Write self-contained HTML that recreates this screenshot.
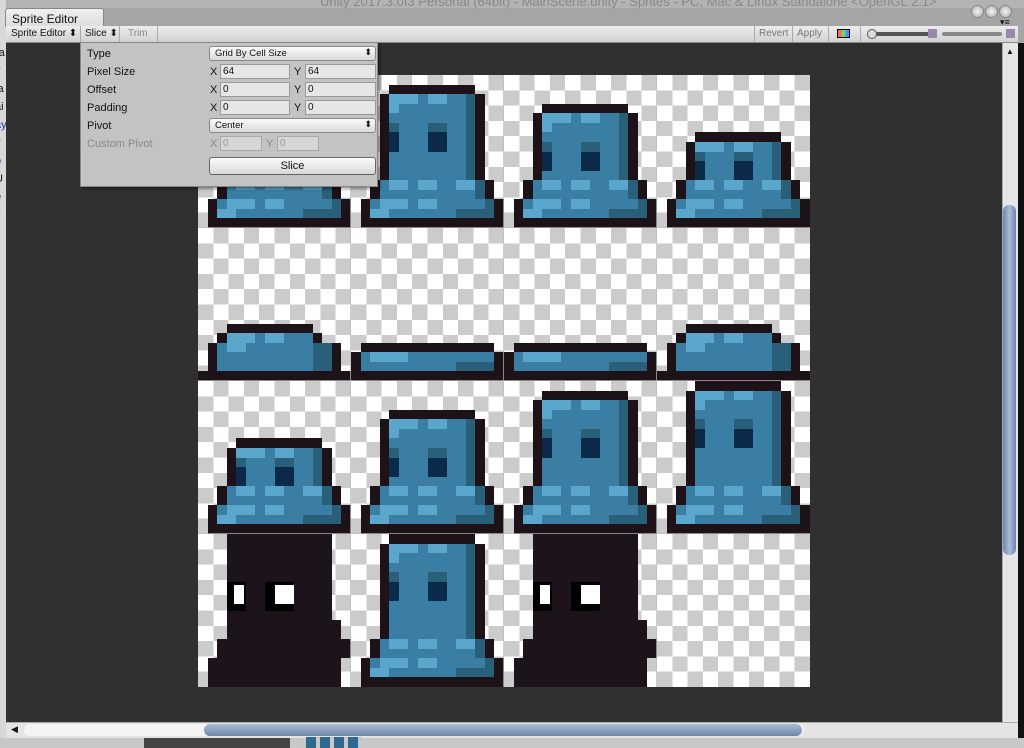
<!DOCTYPE html>
<html><head><meta charset="utf-8"><style>
*{margin:0;padding:0;box-sizing:border-box}
body{width:1024px;height:748px;overflow:hidden;background:#a5a5a5;font-family:"Liberation Sans",sans-serif;font-size:11px;color:#111;position:relative}
.abs{position:absolute}
.tab{left:5px;top:8px;width:99px;height:19px;background:linear-gradient(#f0f0f0,#dcdcdc);border:1px solid #888;border-bottom:none;border-radius:3px 3px 0 0;font-size:12px;padding:3px 0 0 6px}
.tb{left:6px;top:26px;width:1012px;height:17px;background:linear-gradient(#ececec,#d2d2d2);border-bottom:1px solid #888}
.tb span{position:absolute;top:2px;font-size:10px}
.sep{position:absolute;top:0;width:1px;height:16px;background:#aaa}
.canvas{left:6px;top:43px;width:996px;height:679px;background:#303030}
.pop{left:80px;top:42px;width:298px;height:145px;background:#c3c3c3;border:1px solid #888;box-shadow:2px 2px 3px rgba(0,0,0,.4)}
.pop .l{position:absolute;left:6px;font-size:11px}
.fld{position:absolute;height:15px;background:#e6e6e6;border:1px solid #999;font-size:10px;padding:1px 2px}
.dd{position:absolute;left:128px;width:167px;height:15px;background:linear-gradient(#fafafa,#dadada);border:1px solid #888;border-radius:3px;font-size:9.5px;padding:1px 5px}
.dd:after{content:"⬍";position:absolute;right:3px;top:0;font-size:9px}
.xy{position:absolute;font-size:11px}
svg{shape-rendering:crispEdges}
</style></head><body>
<div class="abs" style="left:0;top:0;width:1024px;height:8px;background:#b3b3b3"></div>
<div class="abs" style="left:320px;top:-6px;font-size:13px;color:#888">Unity 2017.3.0f3 Personal (64bit) - MainScene.unity - Sprites - PC, Mac &amp; Linux Standalone &lt;OpenGL 2.1&gt;</div>
<div class="abs" style="left:0;top:0;width:6px;height:748px;background:#d8d8d8"></div>
<div class="abs tab">Sprite Editor</div>
<div class="abs" style="left:971px;top:5px;width:13px;height:13px;border-radius:50%;background:radial-gradient(#f4f4f4,#aaa);border:1px solid #888"></div>
<div class="abs" style="left:985px;top:5px;width:13px;height:13px;border-radius:50%;background:radial-gradient(#f4f4f4,#aaa);border:1px solid #888"></div>
<div class="abs" style="left:999px;top:5px;width:13px;height:13px;border-radius:50%;background:radial-gradient(#f4f4f4,#aaa);border:1px solid #888"></div>
<div class="abs" style="left:1000px;top:17px;font-size:9px">▾≡</div>
<div class="abs tb">
 <span style="left:5px">Sprite Editor ⬍</span><div class="sep" style="left:74px"></div>
 <span style="left:79px">Slice ⬍</span><div class="sep" style="left:113px"></div>
 <span style="left:122px;color:#888">Trim</span><div class="sep" style="left:151px"></div>
 <div class="sep" style="left:748px"></div><span style="left:753px;color:#777">Revert</span>
 <div class="sep" style="left:786px"></div><span style="left:791px;color:#777">Apply</span>
 <div class="sep" style="left:822px"></div>
 <div style="position:absolute;left:831px;top:3px;width:13px;height:9px;border:1px solid #000;background:linear-gradient(90deg,#f66 33%,#6d6 33% 66%,#58f 66%)"></div>
 <div class="sep" style="left:854px"></div>
 <div style="position:absolute;left:861px;top:3px;width:10px;height:10px;border-radius:50%;background:#ddd;border:1px solid #555"></div>
 <div style="position:absolute;left:870px;top:6px;width:55px;height:4px;border-radius:2px;background:#555"></div>
 <div style="position:absolute;left:922px;top:3px;width:9px;height:9px;background:#98a"></div>
 <div style="position:absolute;left:936px;top:6px;width:60px;height:4px;border-radius:2px;background:#888"></div>
 <div style="position:absolute;left:1000px;top:3px;width:9px;height:9px;background:#98a"></div>
</div>
<div class="abs canvas"></div>
<svg class="abs" id="sheet" style="left:198px;top:75px" width="612" height="612"></svg>
<div class="abs" style="left:1002px;top:43px;width:16px;height:679px;background:#e6e6e6;border-left:1px solid #aaa"></div>
<div class="abs" style="left:1006px;top:47px;font-size:8px">▲</div>
<div class="abs" style="left:1003px;top:205px;width:13px;height:350px;border-radius:6px;background:linear-gradient(90deg,#6f86a8,#a9bcd6,#6f86a8)"></div>
<div class="abs" style="left:1018px;top:43px;width:6px;height:705px;background:#111"></div>
<div class="abs" style="left:6px;top:722px;width:1012px;height:16px;background:#e4e4e4;border-top:1px solid #aaa"></div>
<div class="abs" style="left:11px;top:724px;font-size:9px">◀</div>
<div class="abs" style="left:24px;top:724px;width:780px;height:12px;border-radius:6px;background:#f4f4f4"></div>
<div class="abs" style="left:204px;top:724px;width:598px;height:12px;border-radius:6px;background:linear-gradient(#a9bcd6,#6f86a8)"></div>
<div class="abs" style="left:0;top:738px;width:1024px;height:10px;background:#c8c8c8"></div>
<div class="abs" style="left:144px;top:738px;width:146px;height:10px;background:#454545"></div>
<div class="abs" style="left:306px;top:737px;width:56px;height:11px;background:repeating-linear-gradient(90deg,#2d6a93 0 10px,#c8c8c8 10px 14px)"></div>
<div class="abs pop">
 <div class="l" style="top:5px">Type</div><div class="dd" style="top:3px">Grid By Cell Size</div>
 <div class="l" style="top:23px">Pixel Size</div>
 <div class="xy" style="left:129px;top:23px">X</div><div class="fld" style="left:139px;top:21px;width:70px">64</div>
 <div class="xy" style="left:213px;top:23px">Y</div><div class="fld" style="left:224px;top:21px;width:71px">64</div>
 <div class="l" style="top:41px">Offset</div>
 <div class="xy" style="left:129px;top:41px">X</div><div class="fld" style="left:139px;top:39px;width:70px">0</div>
 <div class="xy" style="left:213px;top:41px">Y</div><div class="fld" style="left:224px;top:39px;width:71px">0</div>
 <div class="l" style="top:59px">Padding</div>
 <div class="xy" style="left:129px;top:59px">X</div><div class="fld" style="left:139px;top:57px;width:70px">0</div>
 <div class="xy" style="left:213px;top:59px">Y</div><div class="fld" style="left:224px;top:57px;width:71px">0</div>
 <div class="l" style="top:77px">Pivot</div><div class="dd" style="top:75px">Center</div>
 <div class="l" style="top:95px;color:#888">Custom Pivot</div>
 <div class="xy" style="left:129px;top:95px;color:#888">X</div><div class="fld" style="left:139px;top:93px;width:42px;color:#999;background:#d6d6d6;border-color:#aaa">0</div>
 <div class="xy" style="left:185px;top:95px;color:#888">Y</div><div class="fld" style="left:196px;top:93px;width:42px;color:#999;background:#d6d6d6;border-color:#aaa">0</div>
 <div style="position:absolute;left:128px;top:114px;width:167px;height:18px;border:1px solid #666;border-radius:3px;background:linear-gradient(#fbfbfb,#d8d8d8);text-align:center;font-size:11px;padding-top:2px">Slice</div>
</div>
<div class="abs" style="left:0;top:44px;width:6px;height:170px;font-size:11px;overflow:hidden;line-height:18px;background:#d8d8d8"><div style="margin-left:-5px">ra<br>▾<br>la<br>ai<br><span style="color:#2244aa">ay</span><br>v<br><span style="color:#2244aa">o</span><br>U<br>e<br>a</div></div>
<script>
var s=document.getElementById('sheet'),h='';
var C=153,u=C/16;
for(var y=0;y<612;y+=15.3)for(var x=0;x<612;x+=15.3){var o=((Math.round(x/15.3)+Math.round(y/15.3))%2)?'#cbcbcb':'#fff';h+='<rect x="'+x+'" y="'+y+'" width="15.4" height="15.4" fill="'+o+'"/>';}
function r(cx,cy,c,rw,x0,x1,col){h+='<rect x="'+Math.round(cx*C+x0*u)+'" y="'+Math.round(cy*C+rw*u)+'" width="'+(Math.round(cx*C+(x1+1)*u)-Math.round(cx*C+x0*u))+'" height="'+(Math.round(cy*C+(rw+1)*u)-Math.round(cy*C+rw*u))+'" fill="'+col+'"/>';}
var O='#1d1218',B='#3a7fa3',L='#5aa6cc',D='#2a5f7a',N='#0b2a4a';
function slime(cx,cy,t){
 r(cx,cy,0,t,4,12,O);
 for(var k=t+1;k<=15;k++){var a,b;
  if(k<=10){a=3;b=13}else if(k<=12){a=2;b=14}else{a=1;b=15}
  if(k==15){r(cx,cy,0,k,1,15,O);continue}
  r(cx,cy,0,k,a,b,O);r(cx,cy,0,k,a+1,b-1,B);r(cx,cy,0,k,b-1,b-1,D);
 }
 r(cx,cy,0,t+1,4,6,L);r(cx,cy,0,t+1,8,9,L);r(cx,cy,0,t+2,4,4,L);
 if(t<=6){var e=Math.min(t+5,9);r(cx,cy,0,e-1,4,4,D);r(cx,cy,0,e-1,8,9,D);r(cx,cy,0,e,4,4,N);r(cx,cy,0,e,8,9,N);r(cx,cy,0,e+1,4,4,N);r(cx,cy,0,e+1,8,9,N);}
 r(cx,cy,0,11,4,5,L);r(cx,cy,0,11,7,8,L);r(cx,cy,0,11,11,12,L);
 r(cx,cy,0,13,3,5,L);r(cx,cy,0,13,7,8,L);r(cx,cy,0,14,2,3,L);r(cx,cy,0,14,11,14,D);
}
function dome(cx,cy){r(cx,cy,0,10,3,11,O);r(cx,cy,0,11,2,12,O);r(cx,cy,0,11,3,11,B);r(cx,cy,0,11,3,5,L);r(cx,cy,0,11,7,8,L);
 for(var k=12;k<=14;k++){r(cx,cy,0,k,1,14,O);r(cx,cy,0,k,2,13,B);r(cx,cy,0,k,12,13,D);}r(cx,cy,0,12,3,4,L);r(cx,cy,0,15,0,15,O);}
function flat(cx,cy){r(cx,cy,0,12,1,14,O);r(cx,cy,0,13,0,15,O);r(cx,cy,0,13,1,14,B);r(cx,cy,0,13,2,5,L);r(cx,cy,0,14,0,15,O);r(cx,cy,0,14,1,14,B);r(cx,cy,0,14,11,14,D);r(cx,cy,0,15,0,15,O);}
function shadow(cx,cy){var S='#1d141b';for(var k=0;k<16;k++){var a=3,b=13;if(k>=9)b=14;if(k>=11){a=2;b=15}if(k>=13){a=1;b=14}r(cx,cy,0,k,a,b,S);}
 r(cx,cy,0,5,3,4,'#000');r(cx,cy,0,6,3,4,'#000');r(cx,cy,0,5,7,9,'#000');r(cx,cy,0,6,7,9,'#000');r(cx,cy,0,7,3,4,'#000');r(cx,cy,0,7,7,9,'#000');
 h+='<rect x="'+Math.round(cx*C+3.8*u)+'" y="'+Math.round(cy*C+5.3*u)+'" width="'+Math.round(u)+'" height="'+Math.round(2*u)+'" fill="#fff"/>';
 h+='<rect x="'+Math.round(cx*C+8*u)+'" y="'+Math.round(cy*C+5.3*u)+'" width="'+Math.round(2*u)+'" height="'+Math.round(2*u)+'" fill="#fff"/>';}
slime(0,0,3);slime(1,0,1);slime(2,0,3);slime(3,0,6);
dome(0,1);flat(1,1);flat(2,1);dome(3,1);
slime(0,2,6);slime(1,2,3);slime(2,2,1);slime(3,2,0);
shadow(0,3);slime(1,3,0);shadow(2,3);
for(var i=1;i<4;i++){h+='<rect x="'+(i*C-1)+'" y="0" width="1" height="612" fill="#bbb" opacity=".7"/><rect x="0" y="'+(i*C-1)+'" width="612" height="1" fill="#bbb" opacity=".7"/>';}
s.innerHTML=h;
</script>
</body></html>
